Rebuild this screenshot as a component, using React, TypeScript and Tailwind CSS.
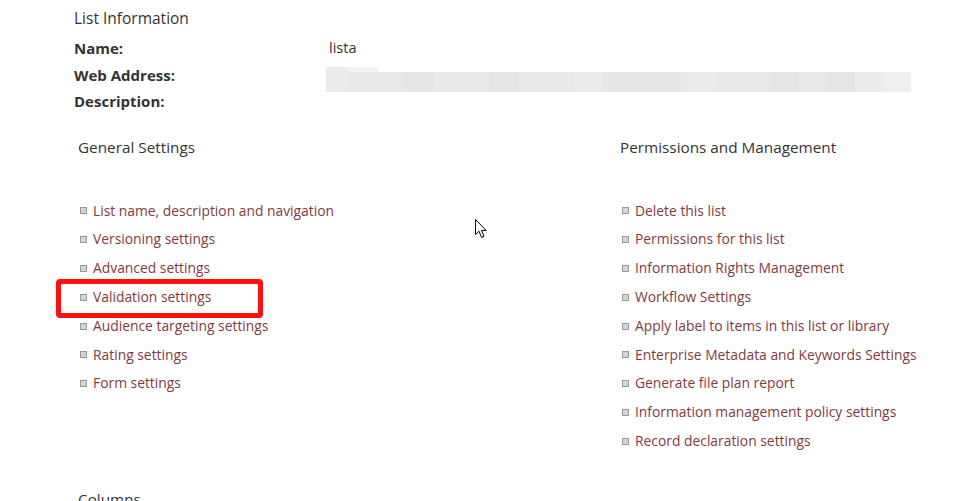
// List settings page: list info header, two settings columns, highlight box
const GENERAL = [
  'List name, description and navigation',
  'Versioning settings',
  'Advanced settings',
  'Validation settings',
  'Audience targeting settings',
  'Rating settings',
  'Form settings',
]

const PERMISSIONS = [
  'Delete this list',
  'Permissions for this list',
  'Information Rights Management',
  'Workflow Settings',
  'Apply label to items in this list or library',
  'Enterprise Metadata and Keywords Settings',
  'Generate file plan report',
  'Information management policy settings',
  'Record declaration settings',
]

// blurred address strip: [width, colour]
const BLUR: [number, string][] = [
  [57, '#e8e8e8'],
  [28, '#e5e5e5'],
  [27, '#e9e9e9'],
  [29, '#e8e8e8'],
  [28, '#e6e6e6'],
  [29, '#e8e8e8'],
  [27, '#e9e9e9'],
  [28, '#ebebe9'],
  [85, '#e7e7e7'],
  [28, '#ebebe9'],
  [56, '#e8e8e8'],
  [28, '#e5e5e5'],
  [28, '#e8e8e8'],
  [28, '#e5e5e5'],
  [28, '#ebebe9'],
  [28, '#eeeff1'],
]

function Bullet() {
  return <span className="mr-[6px] inline-block h-[7px] w-[7px] shrink-0 border border-[#9a9a9a] bg-[#d4d4d4]" />
}

function LinkRow({ label, boxed }: { label: string; boxed?: boolean }) {
  return (
    <li className="relative flex h-[28.8px] items-center">
      <Bullet />
      <a className="text-[#823a41]">{label}</a>
      {boxed && (
        <span className="absolute top-[-4px] left-[-24px] h-[39px] w-[207px] rounded-[4px] border-[5px] border-[#ff1010]" />
      )}
    </li>
  )
}

function Cursor() {
  return (
    <svg className="absolute top-[219px] left-[475px]" width="13" height="20" viewBox="0 0 13 20">
      <path d="M0.5 0.5 L0.5 15.5 L4 12.2 L6.6 18.4 L9 17.4 L6.5 11.4 L11.2 11.4 Z" fill="#fff" stroke="#000" strokeWidth="1" strokeLinejoin="miter" />
    </svg>
  )
}

export default function App() {
  return (
    <div className="relative h-[501px] w-[980px] overflow-hidden bg-white text-[13.85px] text-[#444] [font-family:'Open_Sans',sans-serif]">
      <div className="pt-[7px] pl-[74px]">
        <h2 className="h-[24px] text-[15.5px] leading-[22px] text-[#333]">List Information</h2>
        <div className="mt-[4px] grid grid-cols-[255px_1fr] text-[#333]">
          <div className="h-[26.5px] text-[15px] leading-[26px] font-bold">Name:</div>
          <div className="h-[26.5px] text-[14.5px] leading-[26px]">lista</div>
          <div className="h-[26.5px] text-[15px] leading-[26px] font-bold">Web Address:</div>
          <div className="h-[26.5px] leading-[26px]">
            <div className="mt-[5px] -ml-[3px] flex">
              <div className="h-[25px] w-[23px] bg-[#ebebea]" />
              <div>
                <div className="h-[5px] w-[29px] bg-[#f3f3f2]" />
                <div className="flex h-[20px]">
                  {BLUR.map(([w, c], i) => (
                    <div key={i} className="h-full" style={{ width: w, background: c }} />
                  ))}
                </div>
              </div>
            </div>
          </div>
          <div className="h-[26.5px] text-[15px] leading-[26px] font-bold">Description:</div>
          <div className="h-[26.5px]" />
        </div>
      </div>

      <div className="mt-[21px] grid grid-cols-[542px_1fr] pl-[78px]">
        <div>
          <h3 className="h-[24px] text-[15.3px] leading-[22px] text-[#333]">General Settings</h3>
          <ul className="mt-[37px] pl-[2px]">
            {GENERAL.map((g) => (
              <LinkRow key={g} label={g} boxed={g === 'Validation settings'} />
            ))}
          </ul>
          <h3 className="mt-[90px] text-[15.3px] leading-[22px] text-[#333]">Columns</h3>
        </div>
        <div>
          <h3 className="h-[24px] text-[15.3px] leading-[22px] text-[#333]">Permissions and Management</h3>
          <ul className="mt-[37px] pl-[2px]">
            {PERMISSIONS.map((p) => (
              <LinkRow key={p} label={p} />
            ))}
          </ul>
        </div>
      </div>

      <Cursor />
    </div>
  )
}
